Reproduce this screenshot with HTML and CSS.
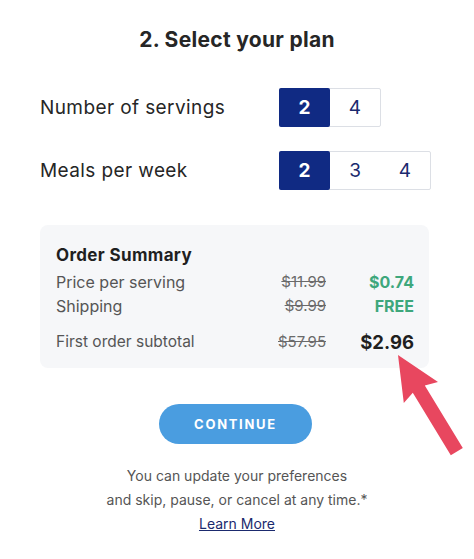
FILE: index.html
```html
<!DOCTYPE html>
<html lang="en">
<head>
<meta charset="utf-8">
<title>Select your plan</title>
<link rel="stylesheet" href="styles.css">
</head>
<body>
<main class="page">
  <h1 class="title">2. Select your plan</h1>

  <div class="options">
    <div class="option-row">
      <span class="option-label">Number of servings</span>
      <div class="segmented">
        <span class="seg seg-active">2</span>
        <span class="seg">4</span>
      </div>
    </div>
    <div class="option-row">
      <span class="option-label">Meals per week</span>
      <div class="segmented">
        <span class="seg seg-active">2</span>
        <span class="seg">3</span>
        <span class="seg">4</span>
      </div>
    </div>
  </div>

  <section class="summary">
    <h2 class="summary-title">Order Summary</h2>
    <div class="summary-grid">
      <span class="s-label">Price per serving</span>
      <span class="s-old">$11.99</span>
      <span class="s-new">$0.74</span>

      <span class="s-label">Shipping</span>
      <span class="s-old">$9.99</span>
      <span class="s-new">FREE</span>

      <span class="s-label s-total-label">First order subtotal</span>
      <span class="s-old s-total-old">$57.95</span>
      <span class="s-total">$2.96</span>
    </div>
  </section>

  <div class="actions">
    <button class="continue" type="button">CONTINUE</button>
    <p class="note">You can update your preferences<br>and skip, pause, or cancel at any time.*</p>
    <a class="learn" href="#">Learn More</a>
  </div>

  <svg class="arrow" viewBox="0 0 474 559" width="474" height="559" aria-hidden="true">
    <polygon points="398,355 438,382 424.8,385.6 462.8,448 450.8,455.2 412.8,392.8 403.8,403" fill="#e8475f"/>
  </svg>
</main>
</body>
</html>
```

FILE: styles.css
```css
* { box-sizing: border-box; }

html, body {
  margin: 0;
  padding: 0;
  background: #ffffff;
}

body {
  font-family: Inter, "Liberation Sans", sans-serif;
  color: #2a2a2a;
}

.page {
  position: relative;
  width: 474px;
  height: 559px;
  overflow: hidden;
}

.title {
  margin: 0;
  padding-top: 26px;
  text-align: center;
  font-size: 21px;
  line-height: 27px;
  font-weight: 700;
  letter-spacing: 0.3px;
  color: #262626;
}

.options {
  display: flex;
  flex-direction: column;
  gap: 24px;
  padding: 35px 0 0 40px;
}

.option-row {
  display: grid;
  grid-template-columns: 239px auto;
  align-items: center;
}

.option-label {
  font-size: 19px;
  line-height: 24px;
  letter-spacing: 0.4px;
  color: #262626;
}

.segmented {
  display: flex;
  width: max-content;
  border: 1px solid #dcdfe5;
  border-radius: 2px;
}

.seg {
  width: 50px;
  height: 37px;
  display: flex;
  align-items: center;
  justify-content: center;
  font-size: 19px;
  color: #1b2a6e;
}

.segmented .seg-active {
  background: #102a83;
  color: #ffffff;
  font-weight: 700;
  margin: -1px 0 -1px -1px;
  height: 39px;
  width: 51px;
  border-radius: 2px;
}

.summary {
  margin: 35px 0 0 40px;
  width: 389px;
  height: 143px;
  background: #f6f7f9;
  border-radius: 8px;
  padding: 19px 15px 0 16px;
}

.summary-title {
  margin: 0 0 4px;
  font-size: 17px;
  line-height: 22px;
  font-weight: 700;
  letter-spacing: 0.35px;
  color: #1f1f1f;
}

.summary-grid {
  display: grid;
  grid-template-columns: 1fr auto 88px;
  align-items: center;
  font-size: 16px;
  line-height: 24px;
}

.s-label { color: #555555; }

.s-total-label { font-size: 15.5px; }

.s-old {
  text-align: right;
  font-size: 15px;
  color: #6a6a6a;
  text-decoration: line-through;
}

.s-new {
  text-align: right;
  color: #3ea77c;
  font-weight: 700;
}

.s-total-label,
.s-total-old,
.s-total {
  margin-top: 11px;
}

.s-total {
  text-align: right;
  font-size: 18.5px;
  font-weight: 700;
  color: #1f1f1f;
  line-height: 26px;
}

.actions {
  display: flex;
  flex-direction: column;
  align-items: center;
  padding-top: 36px;
}

.continue {
  width: 153px;
  height: 40px;
  border: none;
  border-radius: 20px;
  background: #4a9de0;
  color: #ffffff;
  font-family: Inter, "Liberation Sans", sans-serif;
  font-size: 13px;
  font-weight: 700;
  letter-spacing: 1.7px;
  margin-right: 3px;
}

.note {
  margin: 20px 0 0;
  text-align: center;
  font-size: 14px;
  line-height: 24px;
  color: #555555;
}

.learn {
  font-size: 14px;
  line-height: 24px;
  color: #1b2a6e;
  text-decoration: underline;
}

.arrow {
  position: absolute;
  left: 0;
  top: 0;
  pointer-events: none;
}
```
